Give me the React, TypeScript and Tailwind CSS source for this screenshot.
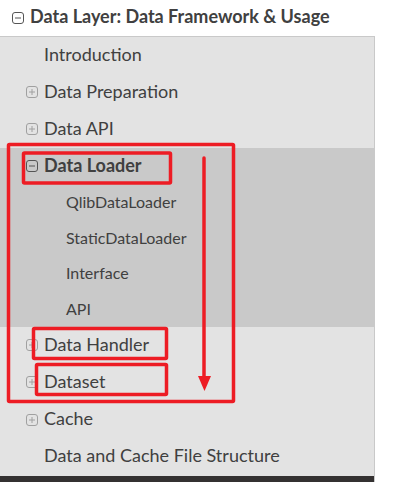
import React from "react";

type Item = { label: string; icon?: "plus" | "minus" };

const top: Item[] = [
  { label: "Introduction" },
  { label: "Data Preparation", icon: "plus" },
  { label: "Data API", icon: "plus" },
];

const loaderChildren = ["QlibDataLoader", "StaticDataLoader", "Interface", "API"];

const bottom: Item[] = [
  { label: "Data Handler", icon: "plus" },
  { label: "Dataset", icon: "plus" },
  { label: "Cache", icon: "plus" },
  { label: "Data and Cache File Structure" },
];

function BoxIcon({ kind, dark = false }: { kind: "plus" | "minus"; dark?: boolean }) {
  const stroke = dark ? "#555" : "#a0a0a0";
  return (
    <svg width="12" height="12" viewBox="0 0 12 12" className="shrink-0">
      <rect x="0.5" y="0.5" width="11" height="11" rx="2.5" fill="none" stroke={stroke} />
      <path d="M3 6h6" stroke={stroke} />
      {kind === "plus" && <path d="M6 3v6" stroke={stroke} />}
    </svg>
  );
}

function Row({ item, h }: { item: Item; h: string }) {
  return (
    <div className={`flex items-center pb-[3px] pl-[26px] ${h}`}>
      <div className="flex w-[18px] pt-[2px]">{item.icon && <BoxIcon kind={item.icon} />}</div>
      <span>{item.label}</span>
    </div>
  );
}

export default function App() {
  return (
    <div
      className="relative h-[482px] w-[402px] overflow-hidden bg-white text-[18px] text-[#404040]"
      style={{ fontFamily: "Lato, 'Open Sans', sans-serif" }}
    >
      <div className="flex h-[36px] items-center gap-[6px] pb-[3px] pl-[12px] font-bold">
        <div className="flex pt-[2px]">
          <BoxIcon kind="minus" dark />
        </div>
        <span>Data Layer: Data Framework &amp; Usage</span>
      </div>

      <div className="w-[375px] border-t border-r border-[#c9c9c9] bg-[#e3e3e3]">
        {top.map((it) => (
          <Row key={it.label} item={it} h="h-[37px]" />
        ))}

        <div className="-mr-px bg-[#c9c9c9]">
          <div className="flex h-[36px] items-center pb-[2px] pl-[26px] font-bold">
            <div className="flex w-[18px] pt-[2px]">
              <BoxIcon kind="minus" dark />
            </div>
            <span>Data Loader</span>
          </div>
          {loaderChildren.map((c) => (
            <div key={c} className="flex h-[35.75px] items-center pl-[66px] text-[16px]">
              {c}
            </div>
          ))}
        </div>

        {bottom.map((it) => (
          <Row key={it.label} item={it} h="h-[37.25px]" />
        ))}
        <div className="h-[8px] bg-[#343131]" />
      </div>

      {/* red annotations */}
      <svg
        className="pointer-events-none absolute left-0 top-0"
        width="402"
        height="482"
        viewBox="0 0 402 482"
      >
        <g fill="none" stroke="#ed1c24" strokeWidth="3.5" strokeLinejoin="round">
          <rect x="8.5" y="144.5" width="225" height="257" rx="1" />
          <rect x="23.5" y="153" width="147" height="30" rx="1" />
          <rect x="33.5" y="328.5" width="133" height="30" rx="1" />
          <rect x="36.5" y="364.5" width="130" height="30" rx="1" />
          <path d="M204 158V380" strokeLinecap="round" />
        </g>
        <path d="M198 376L211 376L204.5 391Z" fill="#ed1c24" />
      </svg>
    </div>
  );
}
